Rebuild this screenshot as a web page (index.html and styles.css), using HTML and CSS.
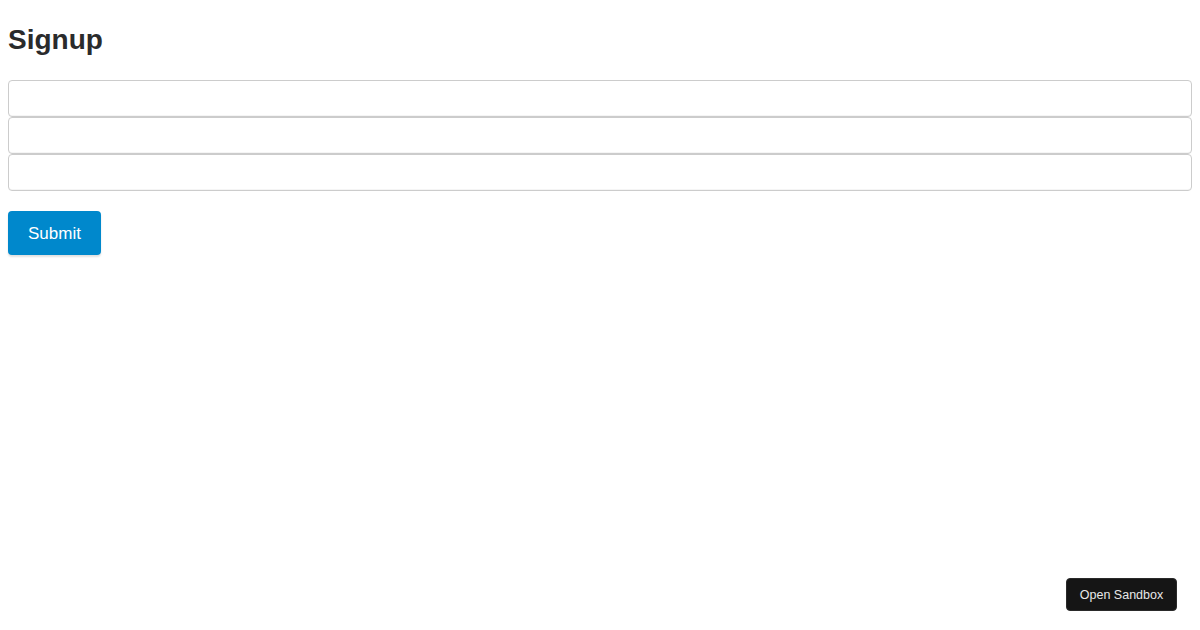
FILE: index.html
```html
<!DOCTYPE html>
<html lang="en">
<head>
<meta charset="utf-8">
<title>Signup</title>
<link rel="stylesheet" href="styles.css">
</head>
<body>
<main class="page">
  <h1 class="title">Signup</h1>
  <form class="form">
    <div class="fields">
      <input class="field" type="text">
      <input class="field" type="email">
      <input class="field" type="password">
    </div>
    <button class="submit" type="button">Submit</button>
  </form>
</main>
<a class="sandbox" href="#">Open Sandbox</a>
</body>
</html>
```

FILE: styles.css
```css
html, body {
  margin: 0;
  padding: 0;
  background: #ffffff;
}
body {
  font-family: "Liberation Sans", Arial, sans-serif;
  color: #2a2a2a;
}
.page {
  padding: 8px;
}
.title {
  margin: 16px 0 24px;
  font-size: 28px;
  line-height: 32px;
  font-weight: bold;
  color: #2a2b2c;
}
.form {
  display: flex;
  flex-direction: column;
  align-items: flex-start;
  gap: 20px;
  margin: 0;
}
.fields {
  display: flex;
  flex-direction: column;
  width: 100%;
}
.field {
  display: block;
  box-sizing: border-box;
  width: 100%;
  height: 37px;
  margin: 0;
  padding: 6px 10px;
  border: 1px solid #cccccc;
  border-radius: 4px;
  background: #ffffff;
  box-shadow: inset 0 -1px 0 rgba(0,0,0,0.04);
  font-family: inherit;
  font-size: 16px;
  outline: none;
}
.submit {
  box-sizing: border-box;
  height: 44px;
  padding: 1px 20px 0;
  border: 0;
  border-radius: 4px;
  background: #0088cc;
  color: #ffffff;
  font-family: "Liberation Sans", Arial, sans-serif;
  font-size: 17px;
  box-shadow: 0 2px 2px rgba(0,0,0,0.12);
  cursor: pointer;
}
.sandbox {
  position: fixed;
  right: 23px;
  bottom: 19px;
  box-sizing: border-box;
  width: 111px;
  height: 33px;
  display: flex;
  align-items: center;
  justify-content: center;
  background: #151515;
  color: #e8e8e8;
  border: 1px solid #2a2a2a;
  border-radius: 4px;
  font-family: "Liberation Sans", Arial, sans-serif;
  font-size: 12.5px;
  text-decoration: none;
}
```
